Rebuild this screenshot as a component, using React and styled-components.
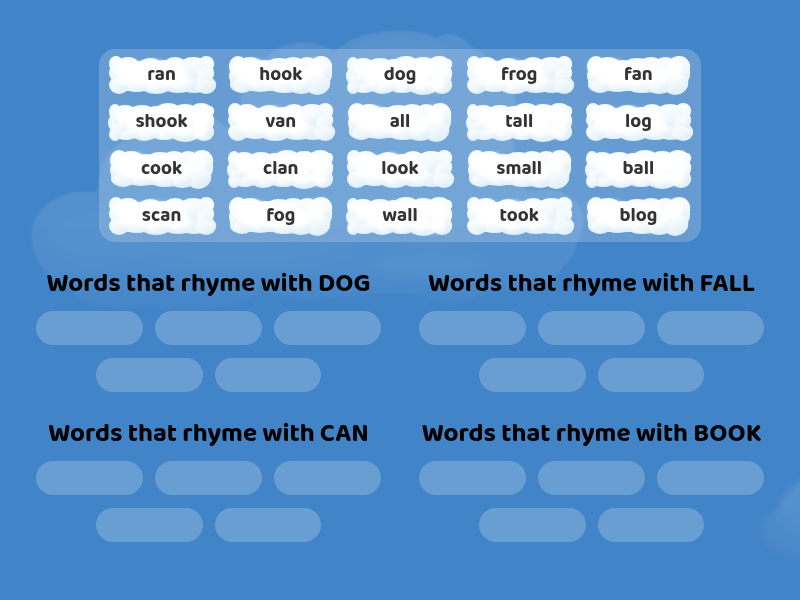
import React from "react";
import styled, { createGlobalStyle } from "styled-components";

const colors = {
    sky: "#4184c8", slot: "rgba(255, 255, 255, 0.21)", tray: "rgba(255, 255, 255, 0.2)",
    word: "#333333", title: "#000000", puff: "#ffffff",
};

const font = `"Baloo 2", "Noto Sans", sans-serif`;

const GlobalStyle = createGlobalStyle`
  * { box-sizing: border-box; }
  body {
    margin: 0;
    background: ${colors.sky};
    font-family: ${font};
  }
`;

const Page = styled.main`
  position: relative;
  min-height: 100vh;
  padding: 49px 36px 32px;
  overflow: hidden;
`;

const Sky = styled.svg`
  position: absolute;
  inset: 0;
  width: 100%;
  height: 100%;
  pointer-events: none;
`;

const WordTray = styled.section`
  position: relative;
  display: grid;
  grid-template-columns: repeat(5, 1fr);
  gap: 8px 12px;
  margin: 0 63px;
  padding: 7px 9px 6px;
  border-radius: 16px;
  background: ${colors.tray};
`;

const WordTile = styled.button`
  position: relative;
  height: 39px;
  padding: 0;
  border: none;
  background: none;
  color: ${colors.word};
  font-family: ${font};
  font-size: 19px;
  font-weight: 700;
  line-height: 39px;
  cursor: grab;
`;

const Puff = styled.svg`
  position: absolute;
  inset: 0;
  width: 100%;
  height: 100%;
  overflow: visible;
`;

const Word = styled.span`
  position: relative;
`;

const Groups = styled.div`
  position: relative;
  display: grid;
  grid-template-columns: 1fr 1fr;
  gap: 28px 38px;
  margin-top: 28px;
`;

const Title = styled.h2`
  margin: 0 0 13px;
  color: ${colors.title};
  font-size: 26px;
  font-weight: 700;
  line-height: 28px;
  text-align: center;
  white-space: nowrap;
`;

const Slots = styled.div`
  display: flex;
  flex-wrap: wrap;
  justify-content: center;
  gap: 13px 12px;
`;

const Slot = styled.div`
  width: calc((100% - 24px) / 3);
  height: 34px;
  border-radius: 17px;
  background: ${colors.slot};
`;

// [cx, cy, rx, ry] of every puff: the outline, the shaded ones, the bright middle
const puffs = [
    {
        edge: [[8, 8, 7, 8], [20, 9, 11, 8], [42, 11, 13, 9], [56, 12, 12, 8], [67, 10, 12, 9], [85, 9, 13, 8], [98, 8, 8, 8],
            [9, 17, 8, 8], [98, 17, 8, 8], [11, 29, 10, 9], [28, 28, 14, 8], [48, 30, 15, 8], [70, 29, 16, 8], [86, 29, 14, 8], [98, 29, 10, 9]],
        soft: [[86, 13, 12, 9], [97, 20, 8, 9], [30, 29, 12, 7], [50, 31, 11, 6], [11, 29, 9, 8], [76, 29, 13, 7], [96, 30, 9, 7], [9, 14, 7, 8]],
        inner: [[17, 13, 11, 9], [27, 15, 12, 9], [45, 15, 14, 11], [64, 15, 13, 10], [42, 23, 17, 8], [66, 23, 15, 8], [22, 22, 12, 7]],
    },
    {
        edge: [[11, 10, 9, 10], [23, 9, 12, 8], [38, 12, 12, 8], [52, 10, 14, 8], [66, 10, 13, 9], [80, 10, 11, 9], [94, 11, 11, 11],
            [13, 20, 11, 10], [96, 17, 9, 12], [15, 28, 12, 9], [33, 27, 17, 9], [55, 28, 15, 9], [74, 29, 14, 9], [90, 29, 12, 10]],
        soft: [[96, 15, 8, 11], [90, 27, 12, 10], [60, 30, 14, 7], [16, 29, 10, 7], [36, 29, 12, 6], [76, 12, 10, 9], [74, 30, 10, 6]],
        inner: [[14, 13, 10, 9], [28, 13, 13, 9], [48, 17, 14, 9], [60, 15, 13, 9], [70, 20, 13, 9], [27, 21, 14, 8], [46, 23, 14, 7], [88, 12, 9, 9]],
    },
    {
        edge: [[7, 9, 6, 8], [17, 9, 11, 7], [34, 10, 13, 8], [48, 11, 11, 8], [60, 10, 14, 10], [77, 9, 12, 8], [93, 8, 11, 8], [102, 8, 4, 5],
            [7, 20, 7, 9], [100, 18, 6, 9], [7, 31, 6, 7], [17, 29, 11, 8], [36, 29, 13, 9], [55, 29, 13, 8], [77, 30, 15, 9], [96, 29, 10, 9]],
        soft: [[13, 24, 9, 8], [20, 32, 9, 5], [40, 32, 9, 5], [59, 32, 9, 5], [80, 20, 15, 9], [98, 25, 7, 10], [8, 32, 6, 5], [9, 12, 7, 8]],
        inner: [[17, 13, 10, 8], [33, 15, 14, 9], [56, 15, 16, 11], [78, 12, 14, 8], [93, 13, 9, 9], [32, 24, 13, 7], [52, 24, 14, 7], [74, 27, 10, 7], [91, 27, 8, 8]],
    },
];

const words = [
    "ran", "hook", "dog", "frog", "fan",
    "shook", "van", "all", "tall", "log",
    "cook", "clan", "look", "small", "ball",
    "scan", "fog", "wall", "took", "blog",
];

const groups = ["DOG", "FALL", "CAN", "BOOK"];

const Ellipses = ({ list, fill, ...rest }) => (
    <g fill={fill} {...rest}>
        {list.map(([cx, cy, rx, ry], i) => (
            <ellipse key={i} cx={cx} cy={cy} rx={rx} ry={ry} />
        ))}
    </g>
)

const PuffShape = ({ variant }) => {
    const shape = puffs[variant]
    return (
        <Puff viewBox="0 0 107 39" preserveAspectRatio="none" aria-hidden="true">
            <rect x="3" y="5" width="100" height="30" rx="7" fill="url(#puffEdge)" />
            <Ellipses list={shape.edge} fill="url(#puffEdge)" />
            <Ellipses list={shape.soft} fill="url(#puffShade)" opacity="0.8" />
            <Ellipses list={shape.inner} fill={colors.puff} filter="url(#puffBlur)" />
        </Puff>
    )
}

const SkyClouds = () => (
    <Sky viewBox="0 0 800 600" preserveAspectRatio="xMidYMid slice" aria-hidden="true">
        <defs>
            <linearGradient id="cloudFade" gradientUnits="userSpaceOnUse" x1="0" y1="30" x2="0" y2="312">
                <stop offset="0" stopColor="#fff" stopOpacity="0.1" />
                <stop offset="0.65" stopColor="#fff" stopOpacity="0.09" />
                <stop offset="0.85" stopColor="#fff" stopOpacity="0.07" />
                <stop offset="1" stopColor="#fff" stopOpacity="0.01" />
            </linearGradient>
            <linearGradient id="cornerFade" x1="0.8" y1="0" x2="0.4" y2="1">
                <stop offset="0" stopColor="#fff" stopOpacity="0.13" />
                <stop offset="1" stopColor="#fff" stopOpacity="0.03" />
            </linearGradient>
            <linearGradient id="puffEdge" gradientUnits="userSpaceOnUse" x1="0" y1="0" x2="0" y2="39">
                <stop offset="0" stopColor="#f8fcff" />
                <stop offset="0.5" stopColor="#eff8fd" />
                <stop offset="1" stopColor="#dcf0fb" />
            </linearGradient>
            <linearGradient id="puffShade" x1="0" y1="0" x2="0.7" y2="1">
                <stop offset="0" stopColor="#fff" />
                <stop offset="0.5" stopColor="#f7fbfe" />
                <stop offset="1" stopColor="#dff0fa" />
            </linearGradient>
            <filter id="cloudBlur"><feGaussianBlur stdDeviation="1" /></filter>
            <filter id="cornerBlur" x="-20%" y="-20%" width="140%" height="140%"><feGaussianBlur stdDeviation="3" /></filter>
            <filter id="lobeBlur" x="-30%" y="-60%" width="160%" height="220%"><feGaussianBlur stdDeviation="8" /></filter>
            <filter id="puffBlur"><feGaussianBlur stdDeviation="2" /></filter>
        </defs>
        <path
            filter="url(#cloudBlur)"
            fill="url(#cloudFade)"
            d="M46 272 C26 252 26 218 50 202 C64 192 80 190 98 192 C98 160 112 144 134 138
               C160 112 196 102 228 128 C238 116 242 108 240 98 C242 84 250 78 258 72
               C266 42 310 34 334 52 C350 38 372 30 404 31 C416 31 428 33 436 38
               C450 30 464 36 470 46 C482 50 490 60 492 70 C516 84 522 108 510 126
               C518 148 510 172 528 192 C548 186 570 190 580 208 C590 228 574 242 574 256
               C560 268 558 284 536 286 C510 294 484 288 480 296 C464 306 440 308 424 296
               C390 290 350 296 330 298 C290 304 280 294 262 292 C234 314 170 312 140 308
               C108 312 78 304 72 290 C60 286 52 280 46 272 Z"
        />
        <g filter="url(#lobeBlur)" fill="#fff">
            <ellipse cx="95" cy="235" rx="48" ry="32" opacity="0.02" />
            <ellipse cx="240" cy="250" rx="120" ry="20" opacity="0.02" />
            <ellipse cx="400" cy="65" rx="60" ry="26" opacity="0.04" />
            <ellipse cx="430" cy="265" rx="60" ry="22" opacity="0.02" />
        </g>
        <path
            filter="url(#cornerBlur)"
            fill="url(#cornerFade)"
            d="M816 474 C788 484 782 500 774 512 C762 520 758 534 764 542 C772 554 786 560 816 562 Z"
        />
    </Sky>
)

const RhymeGroup = ({ name }) => (
    <section>
        <Title>Words that rhyme with {name}</Title>
        <Slots>
            {[0, 1, 2, 3, 4].map((n) => <Slot key={n} />)}
        </Slots>
    </section>
)

function App() {
    return (
        <Page>
            <GlobalStyle />
            <SkyClouds />
            <WordTray>
                {words.map((word, i) => (
                    <WordTile key={word} type="button">
                        <PuffShape variant={i % 3} />
                        <Word>{word}</Word>
                    </WordTile>
                ))}
            </WordTray>
            <Groups>
                {groups.map((name) => <RhymeGroup key={name} name={name} />)}
            </Groups>
        </Page>
    );
}

export default App;
